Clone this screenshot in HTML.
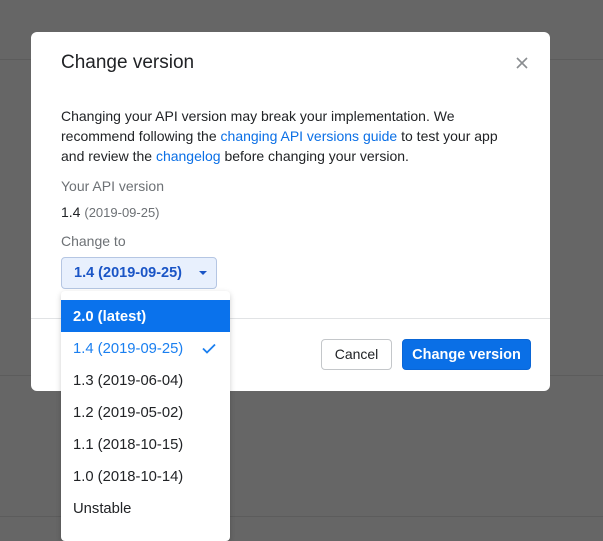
<!DOCTYPE html>
<html><head><style>
*{margin:0;padding:0;box-sizing:border-box}
body{width:603px;height:532px;background:#666;position:relative;overflow:hidden;font-family:"Liberation Sans",sans-serif;color:#212326}
.ln{position:absolute;left:0;right:0;height:1px;background:#5c5c5c}
.modal{position:absolute;left:31px;top:32px;width:519px;height:359px;background:#fff;border-radius:6px}
.t{position:absolute;left:30px;top:20px;font-size:19px;color:#212326}
.x{position:absolute;left:485px;top:25px}
.p{position:absolute;left:30px;top:74px;width:462px;font-size:14px;line-height:20px}
a{color:#0a6fe6;text-decoration:none}
.g{color:#6d7175}
.lbl{position:absolute;left:30px;font-size:14px;color:#6d7175}
.sel{position:absolute;left:30px;top:225px;width:156px;height:32px;background:#e8f0fd;border:1px solid #b5c6e3;border-radius:4px;color:#1a55c6;font-weight:bold;font-size:14.5px;line-height:31px;padding-left:12px}
.sel:after{content:"";position:absolute;left:137px;top:13px;border:4px solid transparent;border-top:4px solid #1a55c6}
.ft{position:absolute;left:0;right:0;top:286px;height:1px;background:#e1e3e5}
.btn{position:absolute;top:307px;height:31px;border-radius:4px;font-size:14px;line-height:29px;text-align:center}
.dd{position:absolute;left:61px;top:291px;width:169px;height:250px;background:#fff;border-radius:4px;box-shadow:0 2px 6px rgba(0,0,0,.2)}
.it{height:32px;line-height:34px;padding-left:12px;font-size:14.8px;position:relative}
</style></head><body>
<div class="ln" style="top:59px"></div>
<div class="ln" style="top:375px"></div>
<div class="ln" style="top:516px"></div>
<div class="modal">
<div class="t">Change version</div>
<svg class="x" width="12" height="12" viewBox="0 0 12 12"><path d="M1 1L11 11M11 1L1 11" stroke="#8a8d91" stroke-width="1.6"/></svg>
<div class="p">Changing your API version may break your implementation. We recommend following the <a>changing API versions guide</a> to test your app and review the <a>changelog</a> before changing your version.</div>
<div class="lbl" style="top:146px">Your API version</div>
<div style="position:absolute;left:30px;top:172px;font-size:14px">1.4 <span class="g" style="font-size:13px">(2019-09-25)</span></div>
<div class="lbl" style="top:201px">Change to</div>
<div class="sel">1.4 (2019-09-25)</div>
<div class="ft"></div>
<div class="btn" style="left:290px;width:71px;border:1px solid #c4c7ca;background:#fff;color:#212326">Cancel</div>
<div class="btn" style="left:371px;width:129px;background:#0a6fe6;color:#fff;font-weight:bold;border:1px solid #0a66d6;font-size:14.5px;line-height:31px">Change version</div>
</div>
<div class="dd">
<div style="height:9px"></div>
<div class="it" style="background:#0a72ec;color:#fff;font-weight:bold">2.0 (latest)</div>
<div class="it" style="color:#1a7ff0">1.4 (2019-09-25)<svg style="position:absolute;left:141px;top:11px" width="14" height="11" viewBox="0 0 14 11"><path d="M1 5.5L5 9.5L13 1.5" stroke="#1a7ff0" stroke-width="1.8" fill="none"/></svg></div>
<div class="it">1.3 (2019-06-04)</div>
<div class="it">1.2 (2019-05-02)</div>
<div class="it">1.1 (2018-10-15)</div>
<div class="it">1.0 (2018-10-14)</div>
<div class="it">Unstable</div>
</div>
</body></html>
